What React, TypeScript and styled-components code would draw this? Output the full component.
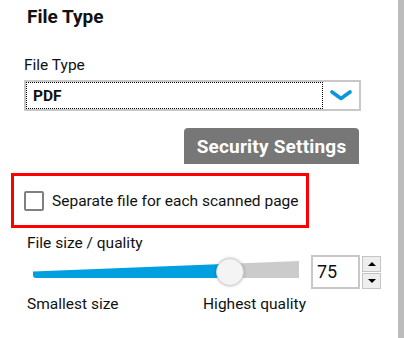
import styled, { createGlobalStyle } from "styled-components"

const GlobalStyle = createGlobalStyle`
  html, body {
    margin: 0;
    padding: 0;
    background: #fff;
  }
  body {
    font-family: Roboto, "Liberation Sans", sans-serif;
    color: #111;
  }
`

const Page = styled.div`
  display: flex;
  width: 404px;
  height: 338px;
  overflow: hidden;
`

const Panel = styled.div`
  flex: 1;
  display: flex;
  flex-direction: column;
  padding: 5px 0 0 24px;
`

const Scrollbar = styled.div`
  width: 6px;
  height: 100%;
  background: #bcbcbc;
`

const Title = styled.h2`
  margin: 0 0 0 3px;
  font-size: 19px;
  line-height: 23px;
  font-weight: bold;
`

const FieldLabel = styled.div<{ $top: number; $indent?: boolean }>`
  margin: ${props => props.$top}px 0 0 ${props => (props.$indent ? 3 : 0)}px;
  font-size: 15.5px;
  line-height: 18px;
`

const Select = styled.div`
  display: flex;
  box-sizing: border-box;
  width: 337px;
  height: 31px;
  margin-top: 6px;
  border: 2px solid #c8c8c8;
`

const SelectValue = styled.div`
  flex: 1;
  display: flex;
  align-items: center;
  padding-left: 6px;
  border: 1px dotted #000;
  font-size: 15.5px;
  font-weight: bold;
`

const SelectButton = styled.div`
  width: 36px;
  display: flex;
  align-items: center;
  justify-content: center;
`

const ActionButton = styled.button`
  align-self: flex-start;
  margin: 17px 0 0 160px;
  width: 175px;
  height: 36px;
  border: none;
  border-radius: 4px 4px 0 0;
  background: #777;
  color: #fff;
  font-family: inherit;
  font-size: 19px;
  font-weight: bold;
  letter-spacing: 0.2px;
  padding: 0;
`

const Highlight = styled.label`
  display: flex;
  align-items: center;
  gap: 8px;
  box-sizing: border-box;
  width: 298px;
  height: 55px;
  margin: 9px 0 0 -13px;
  padding-left: 10px;
  border: 3px solid #f00;
  font-size: 15.5px;
`

const CheckBox = styled.span`
  box-sizing: border-box;
  width: 20px;
  height: 20px;
  border: 2px solid #808080;
  border-radius: 2px;
  background: #fff;
`

const SliderRow = styled.div`
  display: flex;
  align-items: flex-start;
  height: 34px;
  margin-top: 3px;
`

const Slider = styled.div`
  position: relative;
  width: 266px;
  height: 34px;
  margin-left: 9px;
`

const Track = styled.div`
  margin-top: 6px;
  height: 17px;
  border-radius: 3px 0 0 3px;
  clip-path: polygon(0 62%, 100% 0, 100% 100%, 0 100%);
`

const Thumb = styled.div`
  position: absolute;
  top: 3px;
  width: 28px;
  height: 28px;
  margin-left: -14px;
  box-sizing: border-box;
  border-radius: 50%;
  background: #f4f4f4;
  border: 1px solid #d4d4d4;
  box-shadow: 0 0 3px rgba(0, 0, 0, 0.25);
`

const NumberBox = styled.div`
  box-sizing: border-box;
  width: 49px;
  height: 34px;
  margin-left: 12px;
  padding: 3px 0 0 4px;
  border: 2px solid #c8c8c8;
  font-size: 18px;
  line-height: 24px;
`

const Spinner = styled.div`
  display: flex;
  flex-direction: column;
  gap: 1px;
  margin: 1px 0 0 2px;
`

const SpinButton = styled.div<{ $down?: boolean }>`
  box-sizing: border-box;
  width: 19px;
  height: 16px;
  display: flex;
  align-items: center;
  justify-content: center;
  background: #eee;
  border: 1px solid #c4c4c4;

  &::after {
    content: "";
    border-left: 4px solid transparent;
    border-right: 4px solid transparent;
    ${props => (props.$down ? "border-top: 4px solid #000;" : "border-bottom: 4px solid #000;")}
  }
`

const RangeLabels = styled.div`
  display: flex;
  justify-content: space-between;
  width: 279px;
  margin: 6px 0 0 3px;
  font-size: 15.5px;
  line-height: 18px;
`

const quality = 75

export default function App() {
  const pos = quality - 1
  return (
    <>
      <GlobalStyle />
      <Page>
        <Panel>
          <Title>File Type</Title>
          <FieldLabel $top={28}>File Type</FieldLabel>
          <Select>
            <SelectValue>PDF</SelectValue>
            <SelectButton>
              <svg width="22" height="11" viewBox="0 0 22 11">
                <path d="M2 2 L11 8.5 L20 2" fill="none" stroke="#0a96d8" strokeWidth="3.6" strokeLinecap="round" strokeLinejoin="round" />
              </svg>
            </SelectButton>
          </Select>
          <ActionButton>Security Settings</ActionButton>
          <Highlight>
            <CheckBox />
            Separate file for each scanned page
          </Highlight>
          <FieldLabel $top={6} $indent>File size / quality</FieldLabel>
          <SliderRow>
            <Slider>
              <Track style={{ background: `linear-gradient(to right, #00a0e0 ${pos}%, #cbcbcb ${pos}%)` }} />
              <Thumb style={{ left: `${pos}%` }} />
            </Slider>
            <NumberBox>{quality}</NumberBox>
            <Spinner>
              <SpinButton />
              <SpinButton $down />
            </Spinner>
          </SliderRow>
          <RangeLabels>
            <span>Smallest size</span>
            <span>Highest quality</span>
          </RangeLabels>
        </Panel>
        <Scrollbar />
      </Page>
    </>
  )
}
